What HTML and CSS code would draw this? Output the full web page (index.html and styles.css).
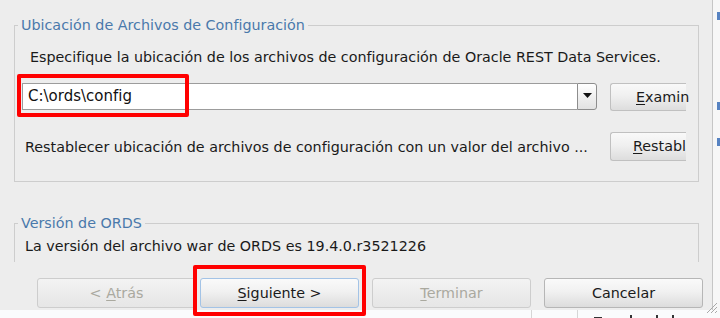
FILE: index.html
```html
<!DOCTYPE html>
<html lang="es">
<head>
<meta charset="utf-8">
<title>Ubicación de Archivos de Configuración</title>
<link rel="stylesheet" href="styles.css">
</head>
<body>
<div class="screen">
  <div class="dialog">
    <div class="panel">
      <fieldset class="group g1">
        <legend>Ubicación de Archivos de Configuración</legend>
        <p class="desc">Especifique la ubicación de los archivos de configuración de Oracle REST Data Services.</p>
        <div class="combo-row">
          <div class="combo">
            <div class="combo-field">C:\ords\config</div>
            <div class="combo-arrow">
              <svg width="9" height="5" viewBox="0 0 9 5"><path d="M0 0H9L4.5 5Z" fill="#111"/></svg>
            </div>
          </div>
          <div class="side-btn examinar"><u>E</u>xamin</div>
        </div>
        <div class="reset-row">
          <span class="reset-label">Restablecer ubicación de archivos de configuración con un valor del archivo ...</span>
          <div class="side-btn restablecer"><u>R</u>establ</div>
        </div>
      </fieldset>
      <fieldset class="group g2">
        <legend>Versión de ORDS</legend>
        <p class="version">La versión del archivo war de ORDS es 19.4.0.r3521226</p>
      </fieldset>
    </div>
    <div class="buttons">
      <div class="wbtn disabled back">&lt; <u>A</u>trás</div>
      <div class="wbtn default next"><u>S</u>iguiente &gt;</div>
      <div class="wbtn disabled finish"><u>T</u>erminar</div>
      <div class="wbtn cancel">Cancelar</div>
    </div>
  </div>
  <div class="edge">
    <span class="blue b1"></span>
    <span class="blue b2"></span>
    <span class="blue b3"></span>
  </div>
</div>
<div class="strip">
  <span class="sep s1"></span>
  <span class="sep s2"></span>
  <span class="frag f1"></span>
  <span class="frag f2"></span>
  <span class="frag f3"></span>
  <span class="frag f4"></span>
</div>
<div class="hl hl1"></div>
<div class="hl hl2"></div>
<svg class="grip" width="14" height="14" viewBox="0 0 14 14">
  <path d="M13 3L3 13M13 7L7 13M13 11L11 13" stroke="#a9a9a9" stroke-width="1"/>
</svg>
</body>
</html>
```
FILE: styles.css
```css
html, body {
  margin: 0;
  padding: 0;
}
body {
  width: 720px;
  height: 318px;
  overflow: hidden;
  position: relative;
  background: #ededed;
  font-family: "DejaVu Sans", "Noto Sans", sans-serif;
  font-size: 14.3px;
  color: #1a1a1a;
}
u {
  text-decoration: underline;
  text-underline-offset: 2px;
}
.screen {
  display: flex;
  height: 310px;
}
.dialog {
  width: 712px;
  display: flex;
  flex-direction: column;
}
.panel {
  height: 262px;
  overflow: hidden;
  box-sizing: border-box;
  padding: 17px 0 0 14px;
}
.group {
  margin: 0;
  padding: 0;
  width: 685px;
  min-width: 0;
  box-sizing: border-box;
  border: 1px solid #cdcdcd;
}
.group legend {
  margin-left: 3px;
  padding: 0 3px;
  line-height: 16px;
  color: #4a79ab;
}
.g1 {
  padding-bottom: 20px;
}
.desc {
  margin: 15px 0 0 15px;
  line-height: 18px;
}
.combo-row {
  display: flex;
  align-items: flex-start;
  margin: 17px 0 0 7px;
  height: 28px;
}
.combo {
  display: flex;
  width: 575px;
  height: 27px;
}
.combo-field {
  flex: 1;
  box-sizing: border-box;
  background: #fff;
  border: 1px solid #9c9c9c;
  border-right: none;
  padding-left: 5px;
  line-height: 25px;
  font-size: 15px;
  color: #111;
}
.combo-arrow {
  width: 20px;
  box-sizing: border-box;
  border: 1px solid #8d8d8d;
  border-radius: 0 3px 3px 0;
  background: linear-gradient(#ffffff, #f0f0f0 50%, #e2e2e2);
  display: flex;
  align-items: center;
  justify-content: center;
  padding-bottom: 3px;
}
.side-btn {
  width: 76px;
  height: 28px;
  flex: none;
  margin-left: 13px;
  box-sizing: border-box;
  border: 1px solid #c0c0c0;
  border-right: none;
  border-radius: 3px 0 0 3px;
  background: linear-gradient(#f9f9f9, #f0f0f0 45%, #dddddd);
  line-height: 26px;
  white-space: nowrap;
  color: #1a1a1a;
}
.examinar {
  padding-left: 25px;
}
.restablecer {
  padding-left: 22px;
  height: 29px;
  line-height: 27px;
  margin-left: auto;
  margin-right: 12px;
}
.reset-row {
  display: flex;
  align-items: center;
  margin: 21px 0 0 10px;
  height: 29px;
}
.reset-label {
  white-space: nowrap;
}
.g2 {
  margin-top: 33px;
  padding-bottom: 40px;
}
.version {
  margin: 6px 0 0 10px;
  line-height: 18px;
}
.buttons {
  height: 48px;
  box-sizing: border-box;
  padding: 16px 0 0 37px;
  display: flex;
  align-items: flex-start;
}
.wbtn {
  width: 159px;
  height: 30px;
  box-sizing: border-box;
  border: 1px solid #b6b6b6;
  border-radius: 3px;
  background: linear-gradient(#fafafa, #f1f1f1 45%, #dcdcdc);
  text-align: center;
  line-height: 28px;
  color: #1a1a1a;
  flex: none;
}
.wbtn.disabled {
  border-color: #cdcdcd;
  background: linear-gradient(#f3f3f3, #ececec 50%, #e6e6e6);
  color: #aaa99f;
}
.wbtn.default {
  border-color: #a3c3e6;
}
.back {
  margin-right: 4px;
}
.next, .finish {
  margin-right: 13px;
}
.edge {
  width: 8px;
  box-sizing: border-box;
  border-left: 1px solid #c6c6c6;
  background: #f7f7f7;
  display: flex;
  flex-direction: column;
  align-items: flex-end;
}
.blue {
  width: 3px;
  background: #5783c2;
  display: block;
}
.b1 { height: 8px; margin-top: 12px; }
.b2 { height: 8px; margin-top: 82px; }
.b3 { height: 8px; margin-top: 28px; }
.strip {
  height: 8px;
  background: #fafbfc;
  display: flex;
  align-items: flex-start;
}
.sep {
  width: 1px;
  height: 8px;
  background: #d6d6d6;
}
.s1 { margin-left: 531px; }
.s2 { margin-left: 45px; }
.frag {
  width: 2px;
  height: 3px;
  margin-top: 5px;
  background: #333;
}
.f1 { margin-left: 16px; width: 8px; height: 1px; margin-top: 7px; }
.f2 { margin-left: 28px; width: 2px; }
.f3 { margin-left: 24px; width: 2px; }
.f4 { margin-left: 14px; width: 2px; }
.hl {
  position: absolute;
  border: 4px solid #ff0000;
  border-radius: 2px;
}
.hl1 {
  left: 17px;
  top: 74px;
  width: 164px;
  height: 35px;
}
.hl2 {
  left: 193px;
  top: 265px;
  width: 165px;
  height: 43px;
}
.grip {
  position: absolute;
  right: 2px;
  bottom: 4px;
}
```
